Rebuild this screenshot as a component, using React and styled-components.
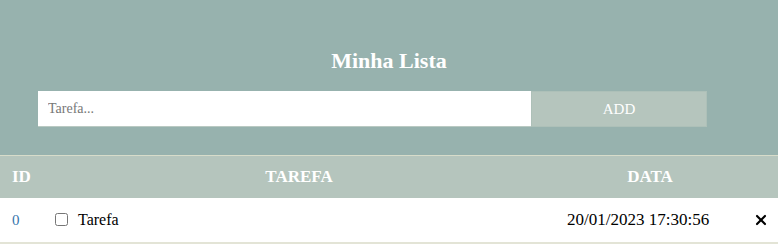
import React, { useState } from "react";
import styled, { createGlobalStyle } from "styled-components";
import { X } from "lucide-react";

const GlobalStyle = createGlobalStyle`
  body {
    margin: 0;
    background: #fff;
    font-family: "Liberation Serif", "Times New Roman", serif;
  }
`;

const App = () => {
  const [tasks, setTasks] = useState([
    { id: 0, title: "Tarefa", date: "20/01/2023 17:30:56", done: false },
  ]);
  const [text, setText] = useState("");

  const onToggle = (id) => {
    setTasks(tasks.map((t) => (t.id === id ? { ...t, done: !t.done } : t)));
  };

  const onRemove = (id) => {
    setTasks(tasks.filter((t) => t.id !== id));
  };

  return (
    <>
      <GlobalStyle />
      <Page>
        <Header>
          <Title>Minha Lista</Title>
          <Form onSubmit={(e) => e.preventDefault()}>
            <Input
              placeholder="Tarefa..."
              value={text}
              onChange={(e) => setText(e.target.value)}
            />
            <AddButton type="submit">ADD</AddButton>
          </Form>
        </Header>
        <Table>
          <thead>
            <HeadRow>
              <Th $align="left" $width="33px">ID</Th>
              <Th $width="508px">TAREFA</Th>
              <Th $width="194px">DATA</Th>
              <Th />
            </HeadRow>
          </thead>
          <tbody>
            {tasks.map((task) => (
              <Row key={task.id}>
                <IdCell>{task.id}</IdCell>
                <TaskCell>
                  <Checkbox
                    type="checkbox"
                    checked={task.done}
                    onChange={() => onToggle(task.id)}
                  />
                  <span>{task.title}</span>
                </TaskCell>
                <DateCell>{task.date}</DateCell>
                <ActionCell>
                  <RemoveButton onClick={() => onRemove(task.id)}>
                    <X size={16} strokeWidth={3.2} />
                  </RemoveButton>
                </ActionCell>
              </Row>
            ))}
          </tbody>
        </Table>
      </Page>
    </>
  );
};

export default App;

const Page = styled.div`
  width: 778px;
`;

const Header = styled.header`
  height: 155px;
  background-color: #97b2ae;
  border-bottom: 1px solid #d7dcca;
  display: flex;
  flex-direction: column;
`;

const Title = styled.h2`
  margin: 0 0 18px;
  padding-top: 49px;
  text-align: center;
  color: #fff;
  font-size: 22px;
  font-weight: bold;
  line-height: 24px;
`;

const Form = styled.form`
  display: flex;
  margin-left: 38px;
  height: 36px;
`;

const Input = styled.input`
  width: 493px;
  height: 36px;
  box-sizing: border-box;
  padding: 0 10px;
  border: none;
  border-bottom: 1px solid #b9c9c2;
  outline: none;
  background: #fff;
  font-family: "Liberation Serif", serif;
  font-size: 14px;
  color: #333;

  &::placeholder {
    color: #777;
  }
`;

const AddButton = styled.button`
  width: 176px;
  height: 36px;
  box-sizing: border-box;
  border: 1px solid #adc0b8;
  background-color: #b5c5bd;
  color: #fff;
  font-family: "Liberation Serif", serif;
  font-size: 15px;
  cursor: pointer;
`;

const Table = styled.table`
  width: 778px;
  border-collapse: collapse;
  table-layout: fixed;
`;

const HeadRow = styled.tr`
  height: 42px;
  background-color: #b5c5bd;
`;

const Th = styled.th`
  width: ${({ $width }) => $width || "auto"};
  text-align: ${({ $align }) => $align || "center"};
  padding: ${({ $align }) => ($align === "left" ? "0 0 0 12px" : "0")};
  color: #fff;
  font-size: 17px;
  font-weight: bold;
`;

const Row = styled.tr`
  height: 45px;
  border-bottom: 2px solid #e3e4d6;
`;

const IdCell = styled.td`
  padding: 0 0 0 12px;
  color: #3574ab;
  font-size: 15px;
`;

const TaskCell = styled.td`
  padding: 0 0 0 6px;
  font-size: 16px;
  color: #000;

  span {
    margin-left: 10px;
  }
`;

const Checkbox = styled.input`
  margin: 0 0 0 4px;
  width: 13px;
  height: 13px;
  vertical-align: -1px;
`;

const DateCell = styled.td`
  padding: 0 0 0 14px;
  font-size: 17px;
  color: #000;
`;

const ActionCell = styled.td`
  padding: 0 0 0 6px;
`;

const RemoveButton = styled.button`
  display: flex;
  align-items: center;
  padding: 0;
  border: none;
  background: none;
  color: #000;
  cursor: pointer;
`;
